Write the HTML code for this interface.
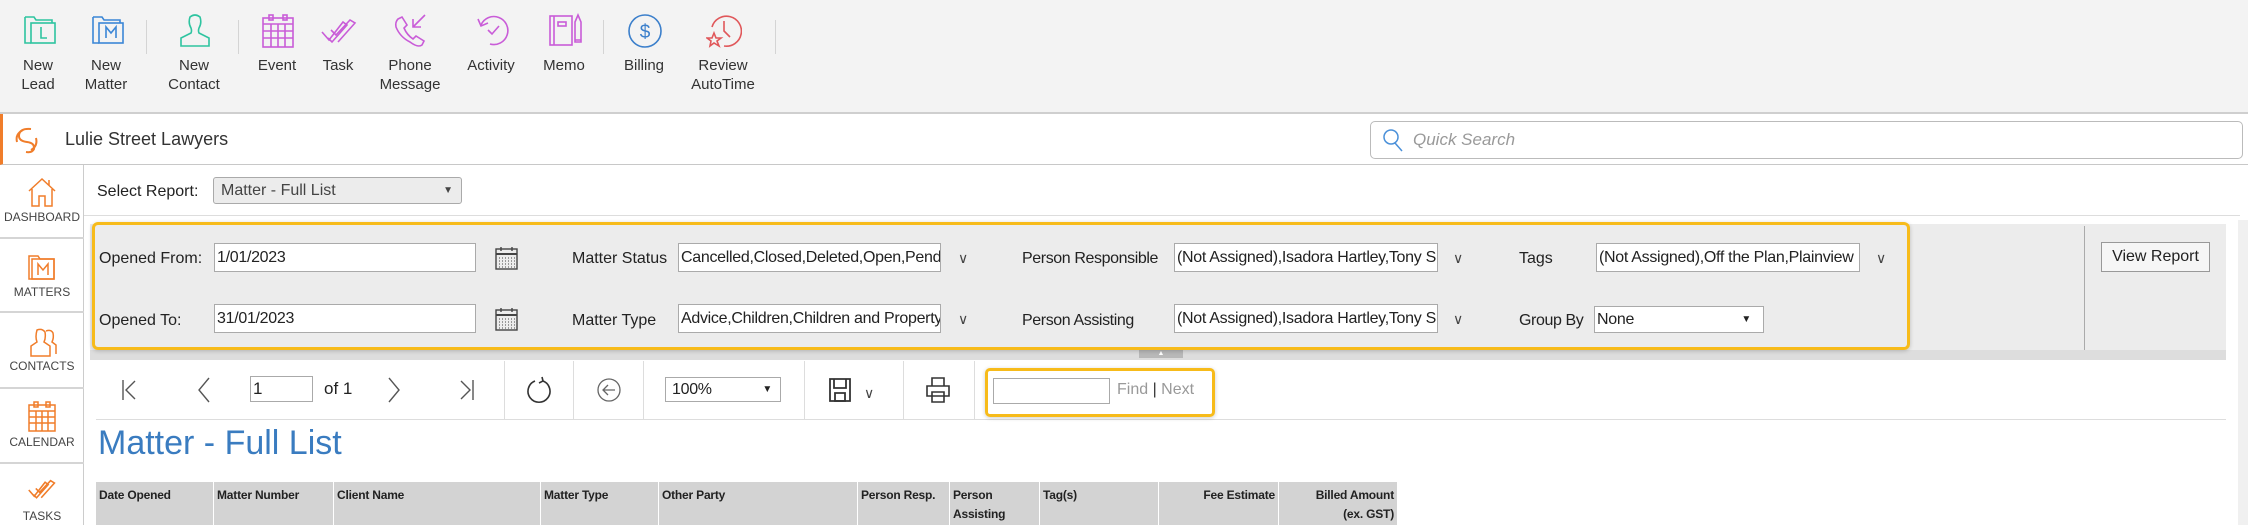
<!DOCTYPE html>
<html><head><meta charset="utf-8"><style>
*{box-sizing:border-box;margin:0;padding:0}
body{width:2248px;height:525px;overflow:hidden;background:#fff;font-family:"Liberation Sans",sans-serif;color:#333;position:relative}
.a{position:absolute}
.tb{left:0;top:0;width:2248px;height:114px;background:#f3f3f3;border-bottom:2px solid #cfcfcf}
.ti{position:absolute;top:56px;font-size:15px;color:#333;text-align:center;line-height:19px;transform:translateX(-50%);white-space:nowrap}
.sep{position:absolute;top:20px;width:1px;height:34px;background:#d4d4d4}
.ic{position:absolute;top:13px}
.side{left:0;top:165px;width:84px;height:360px;border-right:1px solid #ccc}
.sl{position:absolute;width:84px;text-align:center;font-size:12px;color:#444}
.sh{position:absolute;left:0;width:84px;height:2px;background:#d5d5d5}
.lbl{position:absolute;font-size:16px;color:#222;line-height:20px;white-space:nowrap}
.inp{position:absolute;background:#fff;border:1px solid #aaa;height:29px;font-size:16px;line-height:27px;padding-left:2px;overflow:hidden;white-space:nowrap;color:#222;letter-spacing:-0.3px}
.chev{position:absolute;font-size:14px;color:#444}
.th{position:absolute;top:482px;height:43px;font-size:12px;font-weight:bold;color:#222;border-right:1px solid #fff;padding:4px 3px;line-height:19px;white-space:nowrap;letter-spacing:-0.2px}
.vs{position:absolute;top:361px;width:1px;height:58px;background:#ddd}
</style></head><body>
<div class="a tb"></div>
<svg class="ic" style="left:22px" width="36" height="34" viewBox="0 0 36 34" fill="none" stroke="#2ec4a0" stroke-width="1.6"><path d="M3 4h9l2 3h16v3M3 4v26h6"/><rect x="9" y="10" width="24" height="20"/><path d="M19 14v11h6"/></svg>
<svg class="ic" style="left:90px" width="36" height="34" viewBox="0 0 36 34" fill="none" stroke="#3b86d6" stroke-width="1.6"><path d="M3 4h9l2 3h16v3M3 4v26h6"/><rect x="9" y="10" width="24" height="20"/><path d="M16 25V14l5 6 5-6v11"/></svg>
<div class="sep" style="left:146px"></div>
<svg class="ic" style="left:178px" width="34" height="36" viewBox="0 0 34 36" fill="none" stroke="#2ec4a0" stroke-width="1.6"><path d="M12 4q5-4 10 0q2 6-1 11q-1 3 0 5l10 5v8H3v-8l10-5q1-2 0-5q-3-5-1-11z"/></svg>
<div class="sep" style="left:238px"></div>
<svg class="ic" style="left:261px" width="34" height="36" viewBox="0 0 34 36" fill="none" stroke="#c95cd8" stroke-width="1.6"><rect x="2" y="5" width="30" height="29"/><path d="M2 11h30M2 18h30M2 25h30M10 11v23M17 11v23M24 11v23"/><rect x="8" y="2" width="4" height="5"/><rect x="22" y="2" width="4" height="5"/></svg>
<svg class="ic" style="left:321px;top:18px" width="36" height="28" viewBox="0 0 36 28" fill="none" stroke="#c95cd8" stroke-width="1.6"><path d="M1 14l7 8 14-18 4 3-15 17-4-4"/><path d="M10 12l5 5 14-15 5 3-17 19"/></svg>
<svg class="ic" style="left:392px" width="36" height="36" viewBox="0 0 36 36" fill="none" stroke="#c95cd8" stroke-width="1.6"><path d="M6 6l4-2 5 8-3 3q3 7 9 11l3-3 8 5-2 4q-4 3-12-3Q8 24 4 14q-1-5 2-8z"/><path d="M33 2L21 14M21 6v8h8"/></svg>
<svg class="ic" style="left:475px" width="34" height="34" viewBox="0 0 34 34" fill="none" stroke="#c95cd8" stroke-width="1.6"><path d="M6 12A14 14 0 1 1 15 31"/><path d="M3 6l3 7 7-3"/><path d="M13 17l4 4 7-8"/></svg>
<svg class="ic" style="left:548px" width="36" height="34" viewBox="0 0 36 34" fill="none" stroke="#c95cd8" stroke-width="1.6"><rect x="2" y="3" width="22" height="29"/><path d="M6 3v29"/><rect x="10" y="9" width="8" height="4"/><path d="M27 9l3-7 3 7v20h-6zM27 27h6"/></svg>
<div class="sep" style="left:603px"></div>
<svg class="ic" style="left:627px" width="36" height="36" viewBox="0 0 36 36" fill="none" stroke="#3b7fcb" stroke-width="1.6"><circle cx="18" cy="18" r="16"/><text x="18" y="25" font-size="19" text-anchor="middle" fill="#3b7fcb" stroke="none" font-family="Liberation Sans">$</text></svg>
<svg class="ic" style="left:706px" width="36" height="36" viewBox="0 0 36 36" fill="none" stroke="#e0575a" stroke-width="1.6"><path d="M6 14A15 15 0 1 1 18 33"/><path d="M18 8v10l6 6"/><path d="M8 20l2 5h5l-4 3 2 5-5-3-4 3 1-5-4-3h5z"/></svg>
<div class="sep" style="left:775px"></div>
<div class="ti" style="left:38px">New<br>Lead</div>
<div class="ti" style="left:106px">New<br>Matter</div>
<div class="ti" style="left:194px">New<br>Contact</div>
<div class="ti" style="left:277px">Event</div>
<div class="ti" style="left:338px">Task</div>
<div class="ti" style="left:410px">Phone<br>Message</div>
<div class="ti" style="left:491px">Activity</div>
<div class="ti" style="left:564px">Memo</div>
<div class="ti" style="left:644px">Billing</div>
<div class="ti" style="left:723px">Review<br>AutoTime</div>
<div class="a" style="left:0;top:114px;width:2248px;height:51px;border-bottom:1px solid #c8c8c8;border-left:3px solid #f07d2a"></div>
<svg class="a" style="left:13px;top:126px" width="28" height="28" viewBox="0 0 28 28" fill="none" stroke="#f07d2a" stroke-width="2"><path d="M18 3Q6 2 6 10q0 5 8 6t7 7q-2 4-8 3"/><path d="M10 4Q2 8 4 16M18 24q7-4 5-12"/></svg>
<div class="a" style="left:65px;top:129px;font-size:18px;color:#333">Lulie Street Lawyers</div>
<div class="a" style="left:1370px;top:121px;width:873px;height:38px;border:1px solid #bbb;border-radius:5px"></div>
<svg class="a" style="left:1382px;top:128px" width="22" height="24" viewBox="0 0 22 24" fill="none" stroke="#4a90d9" stroke-width="1.5"><circle cx="9" cy="9" r="7"/><path d="M13 15l7 8"/></svg>
<div class="a" style="left:1413px;top:130px;font-size:17px;font-style:italic;color:#999">Quick Search</div>
<div class="a side"></div>
<svg class="a" style="left:27px;top:176px" width="30" height="32" viewBox="0 0 30 32" fill="none" stroke="#f07d2a" stroke-width="1.5"><path d="M2 15L15 3l13 12M5 13v17h7V20h6v10h7V13M22 4v5"/></svg>
<div class="sl" style="top:210px">DASHBOARD</div><div class="sh" style="top:237px"></div>
<svg class="a" style="left:27px;top:253px" width="30" height="28" viewBox="0 0 30 28" fill="none" stroke="#f07d2a" stroke-width="1.5"><path d="M2 3h9l2 3h14v20H2z"/><rect x="5" y="6" width="22" height="20"/><path d="M11 22V11l5 6 5-6v11"/></svg>
<div class="sl" style="top:285px">MATTERS</div><div class="sh" style="top:311px"></div>
<svg class="a" style="left:27px;top:328px" width="30" height="30" viewBox="0 0 30 30" fill="none" stroke="#f07d2a" stroke-width="1.5"><path d="M10 2q5-2 8 2q1 6-1 10l6 4v10H4v-10l6-4q-2-5 0-12z"/><path d="M19 3q5-2 7 2q1 5-1 9l4 3v9"/></svg>
<div class="sl" style="top:359px">CONTACTS</div><div class="sh" style="top:387px"></div>
<svg class="a" style="left:27px;top:400px" width="30" height="32" viewBox="0 0 30 32" fill="none" stroke="#f07d2a" stroke-width="1.5"><rect x="2" y="5" width="26" height="26"/><path d="M2 11h26M2 17h26M2 23h26M9 11v20M15 11v20M21 11v20"/><rect x="7" y="2" width="4" height="5"/><rect x="19" y="2" width="4" height="5"/></svg>
<div class="sl" style="top:435px">CALENDAR</div><div class="sh" style="top:462px"></div>
<svg class="a" style="left:28px;top:478px" width="28" height="24" viewBox="0 0 36 28" fill="none" stroke="#f07d2a" stroke-width="2"><path d="M1 14l7 8 14-18 4 3-15 17-4-4"/><path d="M10 12l5 5 14-15 5 3-17 19"/></svg>
<div class="sl" style="top:509px">TASKS</div>
<div class="lbl" style="left:97px;top:182px;font-size:16px">Select Report:</div>
<div class="a" style="left:213px;top:177px;width:249px;height:27px;background:#ececec;border:1px solid #aaa;border-radius:3px;font-size:16px;line-height:25px;padding-left:7px;color:#444">Matter - Full List<span style="position:absolute;right:8px;top:0;font-size:10px">▼</span></div>
<div class="a" style="left:84px;top:215px;width:2156px;height:1px;background:#ddd"></div>
<div class="a" style="left:90px;top:224px;width:2136px;height:126px;background:#ececec"></div>
<div class="a" style="left:90px;top:350px;width:2136px;height:10px;background:#ddd"></div>
<div class="a" style="left:1139px;top:350px;width:44px;height:8px;background:#b8b8b8;color:#fff;font-size:7px;text-align:center;line-height:8px">▲</div>
<div class="a" style="left:2084px;top:226px;width:1px;height:124px;background:#aaa"></div>
<div class="a" style="left:92px;top:222px;width:1818px;height:128px;border:3px solid #f7bb1a;border-radius:6px;box-shadow:0 1px 4px rgba(0,0,0,.2)"></div>
<div class="a" style="left:2101px;top:242px;width:109px;height:30px;border:1px solid #999;background:#f6f6f6;font-size:16px;line-height:28px;text-align:center;color:#222">View Report</div>
<div class="lbl" style="left:99px;top:249px">Opened From:</div>
<div class="inp" style="left:214px;top:243px;width:262px">1/01/2023</div>
<div class="lbl" style="left:99px;top:311px">Opened To:</div>
<div class="inp" style="left:214px;top:304px;width:262px">31/01/2023</div>
<svg class="a" style="left:495px;top:246px" width="23" height="24" viewBox="0 0 23 24" fill="none" stroke="#444" stroke-width="1.4"><rect x="1" y="3" width="21" height="20"/><path d="M1 8h21" stroke-width="2"/><path d="M6 1v4M17 1v4" /><g stroke-width="1" stroke-dasharray="1 2"><path d="M4 12h16M4 15h16M4 18h16M4 21h16"/></g></svg>
<svg class="a" style="left:495px;top:307px" width="23" height="24" viewBox="0 0 23 24" fill="none" stroke="#444" stroke-width="1.4"><rect x="1" y="3" width="21" height="20"/><path d="M1 8h21" stroke-width="2"/><path d="M6 1v4M17 1v4" /><g stroke-width="1" stroke-dasharray="1 2"><path d="M4 12h16M4 15h16M4 18h16M4 21h16"/></g></svg>
<div class="lbl" style="left:572px;top:249px">Matter Status</div>
<div class="inp" style="left:678px;top:243px;width:263px">Cancelled,Closed,Deleted,Open,Pending</div>
<div class="chev" style="left:958px;top:250px">∨</div>
<div class="lbl" style="left:572px;top:311px">Matter Type</div>
<div class="inp" style="left:678px;top:304px;width:263px">Advice,Children,Children and Property</div>
<div class="chev" style="left:958px;top:311px">∨</div>
<div class="lbl" style="left:1022px;top:249px;letter-spacing:-0.4px">Person Responsible</div>
<div class="inp" style="left:1174px;top:243px;width:264px">(Not Assigned),Isadora Hartley,Tony Smith</div>
<div class="chev" style="left:1453px;top:250px">∨</div>
<div class="lbl" style="left:1022px;top:311px;letter-spacing:-0.4px">Person Assisting</div>
<div class="inp" style="left:1174px;top:304px;width:264px">(Not Assigned),Isadora Hartley,Tony Smith</div>
<div class="chev" style="left:1453px;top:311px">∨</div>
<div class="lbl" style="left:1519px;top:249px">Tags</div>
<div class="inp" style="left:1596px;top:243px;width:264px">(Not Assigned),Off the Plan,Plainview</div>
<div class="chev" style="left:1876px;top:250px">∨</div>
<div class="lbl" style="left:1519px;top:311px;letter-spacing:-0.4px">Group By</div>
<div class="inp" style="left:1594px;top:306px;width:170px;height:27px;line-height:25px">None<span style="position:absolute;right:12px;top:0;font-size:10px">▼</span></div>
<div class="a" style="left:96px;top:419px;width:2130px;height:1px;background:#ddd"></div>
<svg class="a" style="left:121px;top:379px" width="16" height="22" viewBox="0 0 16 22" fill="none" stroke="#555" stroke-width="1.4"><path d="M2 1v20M14 2L5 11l9 9"/></svg>
<svg class="a" style="left:197px;top:377px" width="14" height="26" viewBox="0 0 14 26" fill="none" stroke="#555" stroke-width="1.4"><path d="M12 1L2 13l10 12"/></svg>
<div class="inp" style="left:250px;top:376px;width:63px;height:26px;font-size:17px;line-height:24px">1</div>
<div class="lbl" style="left:324px;top:379px;font-size:17px">of 1</div>
<svg class="a" style="left:387px;top:377px" width="14" height="26" viewBox="0 0 14 26" fill="none" stroke="#555" stroke-width="1.4"><path d="M2 1l10 12L2 25"/></svg>
<svg class="a" style="left:459px;top:379px" width="16" height="22" viewBox="0 0 16 22" fill="none" stroke="#555" stroke-width="1.4"><path d="M14 1v20M2 2l9 9-9 9"/></svg>
<div class="vs" style="left:504px"></div>
<svg class="a" style="left:527px;top:376px" width="24" height="28" viewBox="0 0 24 28" fill="none" stroke="#333" stroke-width="1.6"><path d="M8 5A11 11 0 1 0 16 5"/><path d="M15 1l1 4-4 2"/></svg>
<div class="vs" style="left:573px"></div>
<svg class="a" style="left:597px;top:378px" width="24" height="24" viewBox="0 0 24 24" fill="none" stroke="#666" stroke-width="1.3"><circle cx="12" cy="12" r="11"/><path d="M18 12H6M11 7l-5 5 5 5"/></svg>
<div class="vs" style="left:643px"></div>
<div class="inp" style="left:665px;top:377px;width:116px;height:25px;font-size:16px;line-height:23px;padding-left:6px">100%<span style="position:absolute;right:8px;top:0;font-size:10px">▼</span></div>
<div class="vs" style="left:804px"></div>
<svg class="a" style="left:829px;top:378px" width="22" height="24" viewBox="0 0 22 24" fill="none" stroke="#333" stroke-width="1.8"><path d="M1 1h20v22H1z"/><path d="M5 1v9h12V1M6 15h10v8H6z"/></svg>
<div class="chev" style="left:864px;top:385px">∨</div>
<div class="vs" style="left:903px"></div>
<svg class="a" style="left:926px;top:377px" width="24" height="26" viewBox="0 0 24 26" fill="none" stroke="#333" stroke-width="1.6"><path d="M6 9V1h12v8M1 9h22v10H1zM6 15h12v10H6z"/></svg>
<div class="vs" style="left:974px"></div>
<div class="a" style="left:985px;top:368px;width:230px;height:49px;border:3px solid #f7bb1a;border-radius:5px;box-shadow:0 1px 4px rgba(0,0,0,.2)"></div>
<div class="inp" style="left:993px;top:378px;width:117px;height:26px"></div>
<div class="a" style="left:1117px;top:381px;font-size:16px;color:#999">Find <span style="color:#333">|</span> Next</div>
<div class="a" style="left:98px;top:424px;font-size:34px;color:#3a7cc0">Matter - Full List</div>
<div class="a" style="left:96px;top:482px;width:1302px;height:43px;background:#d3d3d3"></div>
<div class="th" style="left:96px;width:118px">Date Opened</div>
<div class="th" style="left:214px;width:120px">Matter Number</div>
<div class="th" style="left:334px;width:207px">Client Name</div>
<div class="th" style="left:541px;width:118px">Matter Type</div>
<div class="th" style="left:659px;width:199px">Other Party</div>
<div class="th" style="left:858px;width:92px">Person Resp.</div>
<div class="th" style="left:950px;width:90px">Person<br>Assisting</div>
<div class="th" style="left:1040px;width:119px">Tag(s)</div>
<div class="th" style="left:1159px;width:120px;text-align:right">Fee Estimate</div>
<div class="th" style="left:1279px;width:119px;text-align:right">Billed Amount<br>(ex. GST)</div>
<div class="a" style="left:2238px;top:220px;width:10px;height:305px;background:#f0f0f0"></div>
</body></html>
